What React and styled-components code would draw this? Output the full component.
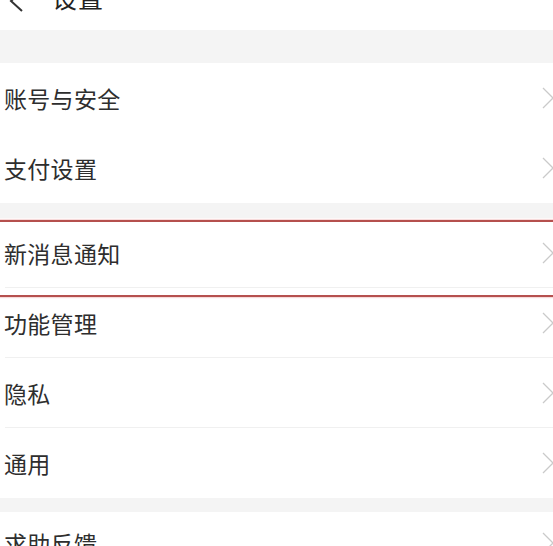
import styled, { createGlobalStyle } from 'styled-components';

const GlobalStyle = createGlobalStyle`
  html, body {
    margin: 0;
    padding: 0;
    background: #ffffff;
    overflow: hidden;
  }
  body {
    font-family: "Noto Sans CJK SC", "Noto Sans", sans-serif;
  }
`;

const Page = styled.div`
  width: 553px;
  height: 546px;
  overflow: hidden;
  background: #ffffff;
`;

const Header = styled.div`
  height: 30px;
  display: flex;
  align-items: flex-start;
  overflow: hidden;
  background: #ffffff;
`;

const BackButton = styled.div`
  width: 52px;
  margin-top: -10px;
  padding-left: 8px;
  box-sizing: border-box;
  display: flex;
`;

const Title = styled.div`
  margin-top: -15px;
  font-size: 25px;
  line-height: 25px;
  color: #222222;
  letter-spacing: 1px;
`;

const Gap = styled.div`
  height: ${(p) => p.h}px;
  background: #f4f4f4;
`;

const Group = styled.div`
  background: #ffffff;
`;

const Row = styled.div`
  position: relative;
  height: ${(p) => p.h || 70}px;
  display: flex;
  align-items: center;
  justify-content: space-between;
  padding-left: 4px;
  box-sizing: border-box;

  &::after {
    content: '';
    display: ${(p) => (p.divider ? 'block' : 'none')};
    position: absolute;
    left: 5px;
    right: 0;
    bottom: 0;
    height: 1px;
    background: #f0f0f0;
  }
`;

const Label = styled.span`
  font-size: 23px;
  color: #2e2e2e;
  letter-spacing: 0.3px;
`;

const Chevron = styled.div`
  width: 13px;
  height: 22px;
  margin-right: -1px;
  display: flex;
`;

const Highlight = styled.div`
  position: absolute;
  left: 0;
  right: 0;
  top: 2px;
  bottom: -9px;
  border-top: 2px solid #b5504e;
  border-bottom: 2px solid #b5504e;
  box-shadow: 0 -1px 1px rgba(230, 150, 150, 0.35), 0 1px 1px rgba(230, 150, 150, 0.35);
  pointer-events: none;
`;

const Arrow = () => (
  <Chevron>
    <svg width="13" height="22" viewBox="0 0 13 22">
      <path d="M2 1 L12 11 L2 21" fill="none" stroke="#cacaca" strokeWidth="1.3" />
    </svg>
  </Chevron>
);

const Item = ({ label, divider, highlight, h }) => (
  <Row divider={divider} h={h}>
    <Label>{label}</Label>
    <Arrow />
    {highlight && <Highlight />}
  </Row>
);

const App = () => (
  <Page>
    <GlobalStyle />
    <Header>
      <BackButton>
        <svg width="16" height="22" viewBox="0 0 16 22">
          <path d="M14 1 L3 11 L14 21" fill="none" stroke="#333333" strokeWidth="2" />
        </svg>
      </BackButton>
      <Title>设置</Title>
    </Header>
    <Gap h={33} />
    <Group>
      <Item label="账号与安全" />
      <Item label="支付设置" />
    </Group>
    <Gap h={15} />
    <Group>
      <Item label="新消息通知" divider highlight />
      <Item label="功能管理" divider />
      <Item label="隐私" divider />
      <Item label="通用" />
    </Group>
    <Gap h={14} />
    <Group>
      <Item label="求助反馈" h={62} />
    </Group>
  </Page>
);

export default App;
